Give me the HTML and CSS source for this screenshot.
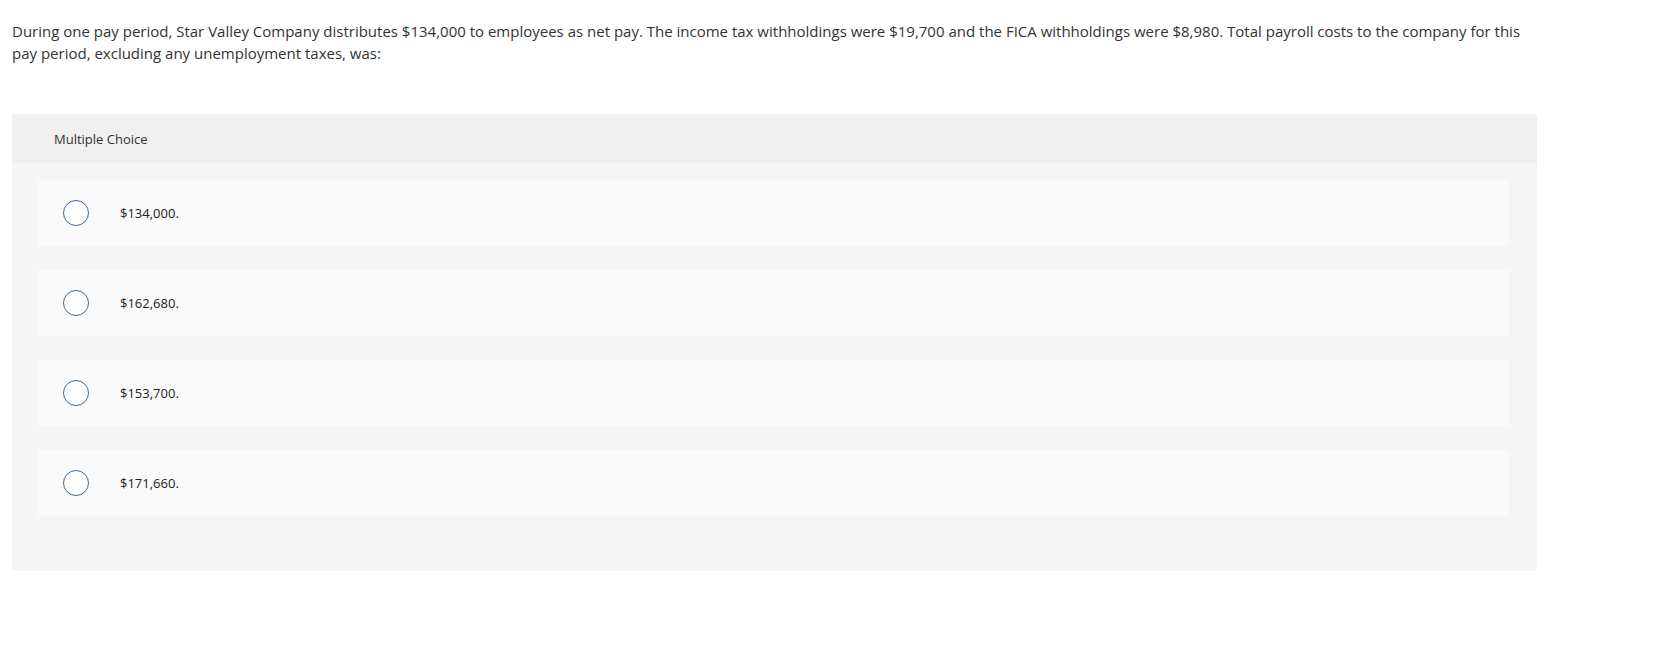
FILE: index.html
```html
<!DOCTYPE html>
<html>
<head>
<meta charset="utf-8">
<link rel="stylesheet" href="styles.css">
</head>
<body>
<div class="page">
  <p class="question">During one pay period, Star Valley Company distributes $134,000 to employees as net pay. The income tax withholdings were $19,700 and the FICA withholdings were $8,980. Total payroll costs to the company for this pay period, excluding any unemployment taxes, was:</p>
  <div class="panel">
    <div class="panel-head">Multiple Choice</div>
    <div class="options">
      <div class="option"><span class="radio"></span><span class="label">$134,000.</span></div>
      <div class="option"><span class="radio"></span><span class="label">$162,680.</span></div>
      <div class="option"><span class="radio"></span><span class="label">$153,700.</span></div>
      <div class="option"><span class="radio"></span><span class="label">$171,660.</span></div>
    </div>
  </div>
</div>
</body>
</html>
```

FILE: styles.css
```css
html, body {
  margin: 0;
  padding: 0;
  background: #ffffff;
}
body {
  font-family: "Open Sans", Lato, Arial, sans-serif;
  color: #333333;
}
.page {
  width: 1525px;
  padding: 0 0 0 12px;
}
.question {
  margin: 0;
  padding-top: 20px;
  font-size: 15px;
  line-height: 22px;
  width: 1525px;
}
.panel {
  margin-top: 50px;
  width: 1525px;
  background: #f5f5f5;
  border-radius: 3px;
  overflow: hidden;
}
.panel-head {
  height: 49px;
  background: #f0f0f0;
  display: flex;
  align-items: center;
  padding-left: 42px;
  font-size: 13px;
}
.options {
  padding: 17px 28px 55px 26px;
  display: flex;
  flex-direction: column;
  gap: 24px;
}
.option {
  height: 66px;
  background: #fafafa;
  border-radius: 3px;
  display: flex;
  align-items: center;
  padding-left: 25px;
}
.radio {
  width: 24px;
  height: 24px;
  border: 1.5px solid #3b6796;
  border-radius: 50%;
  background: #ffffff;
  flex: none;
}
.label {
  margin-left: 31px;
  font-size: 13px;
  color: #222;
}
```
